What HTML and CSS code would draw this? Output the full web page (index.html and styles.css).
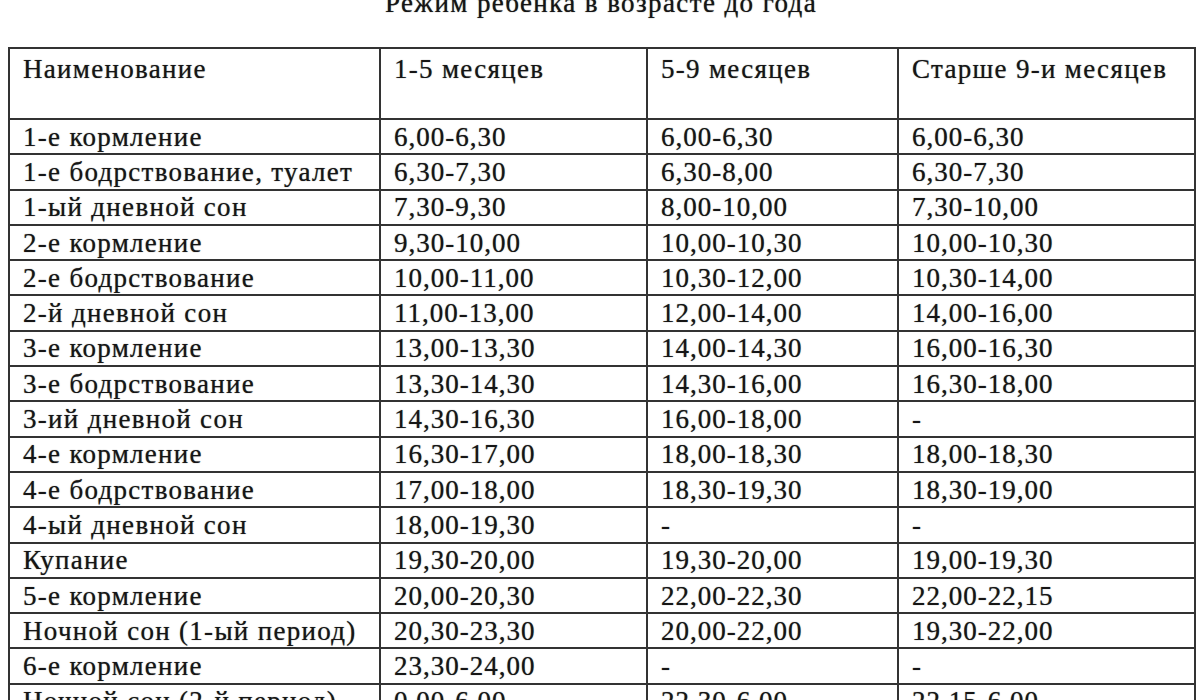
FILE: index.html
```html
<!DOCTYPE html>
<html lang="ru">
<head>
<meta charset="utf-8">
<title>Режим ребенка в возрасте до года</title>
<link rel="stylesheet" href="styles.css">
</head>
<body>
<div class="page">
  <h1 class="title">Режим ребенка в возрасте до года</h1>
  <table class="schedule">
    <colgroup>
      <col class="c1"><col class="c2"><col class="c3"><col class="c4">
    </colgroup>
    <thead>
      <tr class="head">
        <th>Наименование</th>
        <th>1-5 месяцев</th>
        <th>5-9 месяцев</th>
        <th>Старше 9-и месяцев</th>
      </tr>
    </thead>
    <tbody>
      <tr><td>1-е кормление</td><td>6,00-6,30</td><td>6,00-6,30</td><td>6,00-6,30</td></tr>
      <tr><td>1-е бодрствование, туалет</td><td>6,30-7,30</td><td>6,30-8,00</td><td>6,30-7,30</td></tr>
      <tr><td>1-ый дневной сон</td><td>7,30-9,30</td><td>8,00-10,00</td><td>7,30-10,00</td></tr>
      <tr><td>2-е кормление</td><td>9,30-10,00</td><td>10,00-10,30</td><td>10,00-10,30</td></tr>
      <tr><td>2-е бодрствование</td><td>10,00-11,00</td><td>10,30-12,00</td><td>10,30-14,00</td></tr>
      <tr><td>2-й дневной сон</td><td>11,00-13,00</td><td>12,00-14,00</td><td>14,00-16,00</td></tr>
      <tr><td>3-е кормление</td><td>13,00-13,30</td><td>14,00-14,30</td><td>16,00-16,30</td></tr>
      <tr><td>3-е бодрствование</td><td>13,30-14,30</td><td>14,30-16,00</td><td>16,30-18,00</td></tr>
      <tr><td>3-ий дневной сон</td><td>14,30-16,30</td><td>16,00-18,00</td><td>-</td></tr>
      <tr><td>4-е кормление</td><td>16,30-17,00</td><td>18,00-18,30</td><td>18,00-18,30</td></tr>
      <tr><td>4-е бодрствование</td><td>17,00-18,00</td><td>18,30-19,30</td><td>18,30-19,00</td></tr>
      <tr><td>4-ый дневной сон</td><td>18,00-19,30</td><td>-</td><td>-</td></tr>
      <tr><td>Купание</td><td>19,30-20,00</td><td>19,30-20,00</td><td>19,00-19,30</td></tr>
      <tr><td>5-е кормление</td><td>20,00-20,30</td><td>22,00-22,30</td><td>22,00-22,15</td></tr>
      <tr><td>Ночной сон (1-ый период)</td><td>20,30-23,30</td><td>20,00-22,00</td><td>19,30-22,00</td></tr>
      <tr><td>6-е кормление</td><td>23,30-24,00</td><td>-</td><td>-</td></tr>
      <tr><td>Ночной сон (2-й период)</td><td>0,00-6,00</td><td>22,30-6,00</td><td>22,15-6,00</td></tr>
    </tbody>
  </table>
</div>
</body>
</html>
```

FILE: styles.css
```css
html, body {
  margin: 0;
  padding: 0;
  background: #ffffff;
}

.page {
  padding: 0 6px 0 8px;
  font-family: "Liberation Serif", "DejaVu Serif", serif;
  color: #151515;
  overflow: hidden;
  height: 700px;
}

.title {
  margin: -12px 0 0 0;
  height: 59px;
  font-size: 27px;
  line-height: 30px;
  font-weight: normal;
  text-align: center;
  letter-spacing: 1.4px;
  text-shadow: 0 0 1px rgba(0, 0, 0, 0.7);
}

.schedule {
  width: 1186px;
  border-collapse: collapse;
  table-layout: fixed;
  border: 2px solid #333333;
  font-size: 27px;
  letter-spacing: 1.3px;
  text-shadow: 0 0 1px rgba(0, 0, 0, 0.6);
}

.c1 { width: 371px; }
.c2 { width: 267px; }
.c3 { width: 251px; }
.c4 { width: 297px; }

.schedule th,
.schedule td {
  border: 2px solid #333333;
  padding: 0 0 0 13px;
  text-align: left;
  white-space: nowrap;
  overflow: hidden;
}

.schedule th {
  font-weight: normal;
  vertical-align: top;
  padding-top: 5px;
  height: 64px;
}

.schedule tbody tr {
  height: 35.3px;
}

.schedule td {
  vertical-align: middle;
  line-height: 30px;
}

.schedule td + td {
  letter-spacing: 1px;
}
```
